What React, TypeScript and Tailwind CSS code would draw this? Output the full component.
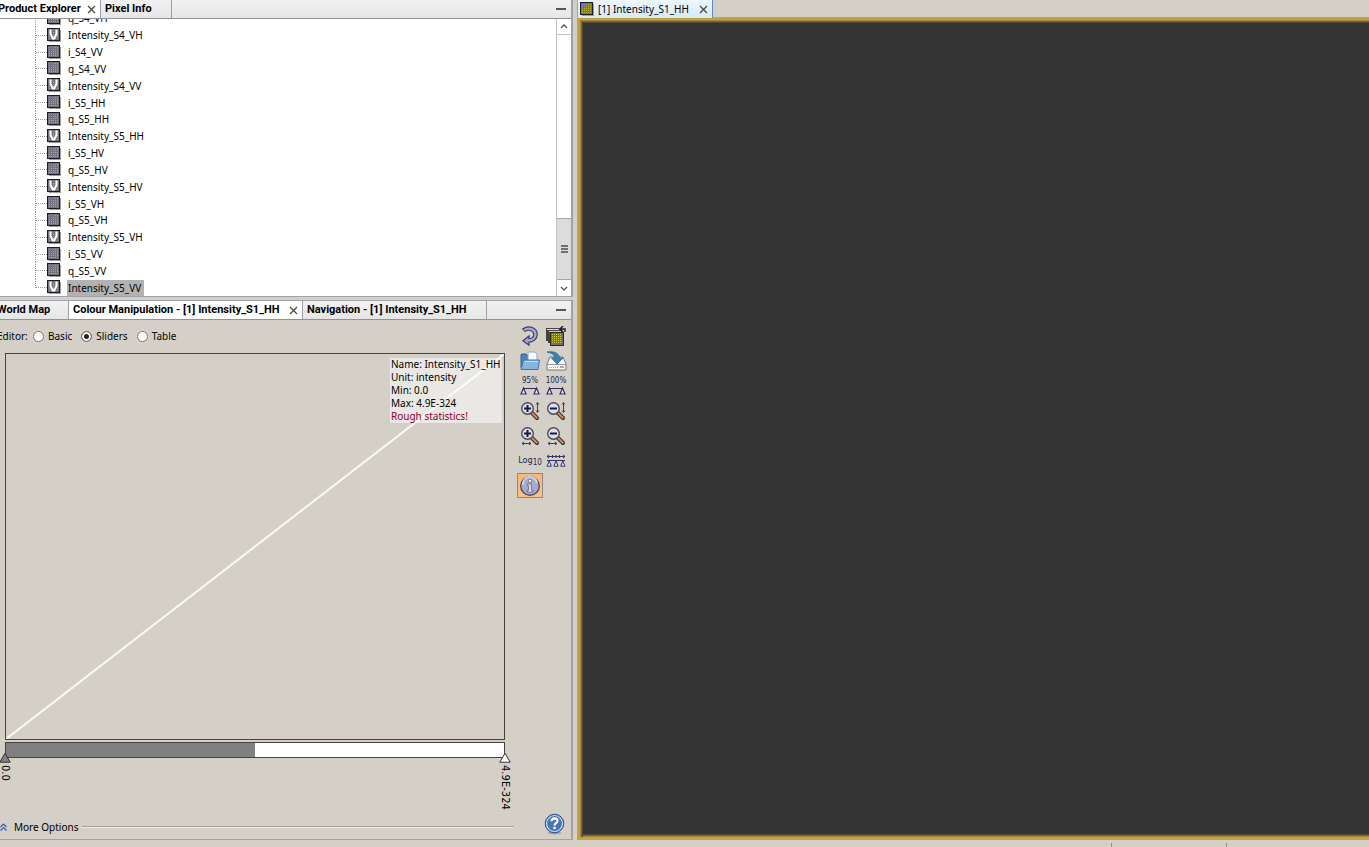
import { useState } from 'react';
import type { ReactNode } from 'react';
import clsx from 'clsx';

const BANDS = [
    'q_S4_VH', 'Intensity_S4_VH', 'i_S4_VV', 'q_S4_VV', 'Intensity_S4_VV',
    'i_S5_HH', 'q_S5_HH', 'Intensity_S5_HH', 'i_S5_HV', 'q_S5_HV',
    'Intensity_S5_HV', 'i_S5_VH', 'q_S5_VH', 'Intensity_S5_VH', 'i_S5_VV',
    'q_S5_VV', 'Intensity_S5_VV',
];

const DOTS = [2, 4, 6, 8, 10];

function BandIcon({ virtual = false }: { virtual?: boolean }) {
    return (
        <svg width="15" height="15" viewBox="0 0 15 15" className="shrink-0">
            <rect x="2" y="2" width="12" height="12" fill="#a09e98" />
            <rect x="0" y="0" width="13" height="13" fill="#1c1c24" />
            <rect x="1" y="1" width="11" height="11" fill="#73737f" />
            {DOTS.map(y => DOTS.map(x => (
                <rect key={`${x}-${y}`} x={x} y={y} width="1" height="1" fill={x + y > 9 ? '#b8b23c' : '#8686b4'} />
            )))}
            {virtual && (
                <path d="M3.5 1.5 V6 L5.8 10.5 H7.2 L9.5 6 V1.5" fill="none" stroke="#fff" strokeWidth="2" />
            )}
        </svg>
    );
}

function CloseIcon() {
    return (
        <svg width="9" height="9" viewBox="0 0 9 9" className="shrink-0">
            <path d="M1 1 L8 8 M8 1 L1 8" stroke="#444" strokeWidth="1.2" />
        </svg>
    );
}

interface TabProps {
    label: string;
    active?: boolean;
    className?: string;
}

function Tab({ label, active, className }: TabProps) {
    return (
        <button
            type="button"
            className={clsx(
                'flex items-center gap-1 shrink-0 h-full border-r border-[#9b9ea8] font-[Roboto,sans-serif] text-[11px] font-bold whitespace-nowrap',
                active ? 'bg-white' : 'bg-linear-to-b from-[#f2f2f2] to-[#e6e6e6]',
                className,
            )}
        >
            {label}
            {active && <span className="ml-auto mr-1"><CloseIcon /></span>}
        </button>
    );
}

function TabBar({ children }: { children: ReactNode }) {
    return (
        <div className="flex h-[19px] shrink-0 border-b border-[#8f929c] bg-linear-to-b from-[#f2f2f2] to-[#e6e6e6]">
            {children}
            <button type="button" aria-label="Minimize" className="ml-auto mr-[5px] flex items-center">
                <span className="block h-[2px] w-[10px] bg-[#555]" />
            </button>
        </div>
    );
}

function ProductExplorer() {
    const [selected, setSelected] = useState('Intensity_S5_VV');

    return (
        <section className="flex flex-col shrink-0 h-[297px] border-r-2 border-b border-[#9fa2a8] bg-white">
            <TabBar>
                <Tab label="Product Explorer" active className="w-[101px] indent-[-2px]" />
                <Tab label="Pixel Info" className="w-[71px] pl-1" />
            </TabBar>
            <div className="flex flex-1 min-h-0">
                <div className="flex flex-1 flex-col justify-end overflow-hidden">
                    <ul className="flex flex-col shrink-0 h-[286px] pl-[35px]">
                        {BANDS.map((name, i) => (
                            <li key={name} className="flex flex-1 min-h-0 items-center">
                                <span className="h-full w-px flex flex-col">
                                    <span className={clsx('border-l border-dotted border-[#999]', i === BANDS.length - 1 ? 'h-1/2' : 'h-full')} />
                                </span>
                                <span className="w-[11px] border-t border-dotted border-[#999]" />
                                <BandIcon virtual={name.startsWith('Intensity')} />
                                <button
                                    type="button"
                                    onClick={() => setSelected(name)}
                                    className={clsx('ml-[5px] pl-px pr-[3px] h-[16px] leading-[16px]', name === selected && 'bg-[#b2b2b2]')}
                                >
                                    {name}
                                </button>
                            </li>
                        ))}
                    </ul>
                </div>
                <div className="flex flex-col w-[15px] border-l border-[#c4c4c4]">
                    <button type="button" aria-label="Scroll up" className="flex h-[16px] items-center justify-center border-b border-[#c4c4c4]">
                        <svg width="8" height="5" viewBox="0 0 8 5"><path d="M1 4 L4 1 L7 4" fill="none" stroke="#555" strokeWidth="1.3" /></svg>
                    </button>
                    <div className="flex-1" />
                    <div className="flex flex-col h-[62px] items-center justify-center gap-px border-y border-[#a6a6a6] bg-[#dcdcdc]">
                        <span className="h-[2px] w-[7px] bg-[#707070]" />
                        <span className="h-[2px] w-[7px] bg-[#707070]" />
                        <span className="h-[2px] w-[7px] bg-[#707070]" />
                    </div>
                    <button type="button" aria-label="Scroll down" className="flex h-[16px] items-center justify-center">
                        <svg width="8" height="5" viewBox="0 0 8 5"><path d="M1 1 L4 4 L7 1" fill="none" stroke="#555" strokeWidth="1.3" /></svg>
                    </button>
                </div>
            </div>
        </section>
    );
}

/* ---- toolbar icons ---- */

function ResetIcon() {
    return (
        <svg width="20" height="20" viewBox="0 0 20 20">
            <path d="M3.5 4.5 C8 0.5 15.5 3 15.5 8.5 C15.5 12 12.5 14.5 8.5 14.5" fill="none" stroke="#3a3a58" strokeWidth="4.6" />
            <path d="M9 10 L3 14.8 L9 19.2 Z" fill="#a4a4dc" stroke="#3a3a58" strokeWidth="1.2" />
            <path d="M4.2 4.1 C8.5 1 15.5 3.2 15.5 8.5 C15.5 12 12.5 14.5 8 14.5" fill="none" stroke="#a9a9de" strokeWidth="2.4" />
        </svg>
    );
}

function ApplyAllIcon() {
    return (
        <svg width="20" height="20" viewBox="0 0 20 20">
            <rect x="0" y="2" width="14" height="13" fill="#44443f" />
            <rect x="1" y="3" width="12" height="1" fill="#ddd" />
            <rect x="2" y="4" width="14" height="13" fill="#44443f" />
            <rect x="3" y="5" width="12" height="1" fill="#ccc" />
            <rect x="4" y="6" width="14" height="14" fill="#2a2a30" />
            <rect x="5" y="7" width="12" height="12" fill="#6c6c88" />
            {DOTS.map(y => DOTS.map(x => (
                <rect key={`${x}-${y}`} x={x + 4} y={y + 6} width="1" height="1" fill="#cfc83c" />
            )))}
            <path d="M19 6 V3 H15 M17 0 L14 3 L17 6" fill="none" stroke="#222" strokeWidth="1.5" />
        </svg>
    );
}

function FolderIcon() {
    return (
        <svg width="20" height="20" viewBox="0 0 20 20">
            <path d="M1 17 V4 Q1 3 2 3 H6 L8 5 H15 V17 Z" fill="#4d83b8" stroke="#2f628f" />
            <path d="M8 1 H15 L17 3 V10 H8 Z" fill="#f7fafd" stroke="#8fa9c0" />
            <path d="M1 18.5 L3.5 9 H19.5 L18 18.5 Z" fill="#86b5e2" stroke="#3d75aa" />
            <path d="M4.5 10.5 H18" stroke="#c4def4" />
        </svg>
    );
}

function SaveIcon() {
    return (
        <svg width="21" height="20" viewBox="0 0 21 20">
            <path d="M4 6 H17 L20 13 V19 H1 V13 Z" fill="#f6f6f6" stroke="#777" />
            <path d="M1 13.5 H20" stroke="#999" />
            <path d="M3 16.5 H12" stroke="#a5a5a5" strokeDasharray="1 1" />
            <rect x="14" y="15" width="4" height="2" fill="#aab" />
            <path d="M1 1 C8 0 13 2 13.5 7 H17 L11 13 L5.5 7 H9 C9 4 6 2 1 1 Z" fill="#3e84b5" stroke="#23628f" strokeWidth="0.8" />
        </svg>
    );
}

function StretchIcon({ label }: { label: string }) {
    return (
        <span className="flex flex-col items-center">
            <span className="h-[10px] font-['DejaVu_Sans_Condensed','DejaVu_Sans',sans-serif] text-[8px] leading-[10px] text-[#1e1e50]">{label}</span>
            <svg width="20" height="9" viewBox="0 0 20 9">
                <path d="M4 2.5 H16" stroke="#30305c" />
                <path d="M1 8 L3.5 2 L6 8 Z M14 8 L16.5 2 L19 8 Z" fill="#e4e4f2" stroke="#30305c" strokeWidth="1.2" />
            </svg>
        </span>
    );
}

function ZoomIcon({ plus = false, vertical = false }: { plus?: boolean; vertical?: boolean }) {
    return (
        <svg width="20" height="20" viewBox="0 0 20 20">
            <path d="M11.5 11.5 L17 17" stroke="#3a2d28" strokeWidth="4" strokeLinecap="round" />
            <path d="M12 12 L16.8 16.8" stroke="#d08c64" strokeWidth="2" strokeLinecap="round" />
            <circle cx="7.5" cy="7.5" r="5.8" fill="#dcdcf2" stroke="#4a4a54" strokeWidth="1.4" />
            <path d={plus ? 'M4 7.5 H11 M7.5 4 V11' : 'M4 7.5 H11'} stroke="#1d1d30" strokeWidth="2" />
            {vertical ? (
                <path d="M17.5 2 V11 M16 3.5 L17.5 1.5 L19 3.5 M16 9.5 L17.5 11.5 L19 9.5" fill="none" stroke="#3a3a74" />
            ) : (
                <path d="M2 17.5 H11 M4 16 L2 17.5 L4 19 M9 16 L11 17.5 L9 19" fill="none" stroke="#3a3a74" />
            )}
        </svg>
    );
}

function EvenIcon() {
    return (
        <svg width="20" height="14" viewBox="0 0 20 14">
            <path d="M1 2.5 H19 M3 1 L1 2.5 L3 4 M17 1 L19 2.5 L17 4 M6.5 1 V4 M10 1 V4 M13.5 1 V4" fill="none" stroke="#34346a" />
            <path d="M1 6.5 H19" stroke="#34346a" />
            <path d="M1 12.2 L3.2 7 L5.4 12.2 Z M7.8 12.2 L10 7 L12.2 12.2 Z M14.6 12.2 L16.8 7 L19 12.2 Z" fill="#e4e4f2" stroke="#34346a" />
        </svg>
    );
}

function InfoIcon() {
    return (
        <svg width="22" height="22" viewBox="0 0 22 22">
            <circle cx="11" cy="11" r="9.3" fill="#a9a9cf" stroke="#4d4d66" strokeWidth="1.4" />
            <path d="M4 10 A7 7 0 0 1 18 8" fill="none" stroke="#cfcfe8" strokeWidth="2" />
            <circle cx="11" cy="5.8" r="1.7" fill="#fff" stroke="#55556c" strokeWidth="0.7" />
            <path d="M8.3 9 H12.4 V15.2 H14 V17 H8 V15.2 H9.8 V10.8 H8.3 Z" fill="#e8e8f4" stroke="#55556c" strokeWidth="0.7" />
        </svg>
    );
}

const TOOLS: { label: string; icon: ReactNode; pressed?: boolean }[] = [
    { label: 'Reset to defaults', icon: <ResetIcon /> },
    { label: 'Apply to other bands', icon: <ApplyAllIcon /> },
    { label: 'Import settings', icon: <FolderIcon /> },
    { label: 'Export settings', icon: <SaveIcon /> },
    { label: 'Stretch 95%', icon: <StretchIcon label="95%" /> },
    { label: 'Stretch 100%', icon: <StretchIcon label="100%" /> },
    { label: 'Zoom in vertically', icon: <ZoomIcon plus vertical /> },
    { label: 'Zoom out vertically', icon: <ZoomIcon vertical /> },
    { label: 'Zoom in horizontally', icon: <ZoomIcon plus /> },
    { label: 'Zoom out horizontally', icon: <ZoomIcon /> },
    {
        label: 'Logarithmic display',
        icon: <span className="font-['DejaVu_Sans_Condensed','DejaVu_Sans',sans-serif] text-[9px] text-[#1e1e50]">Log<sub className="text-[8px]">10</sub></span>,
    },
    { label: 'Distribute evenly', icon: <EvenIcon /> },
    { label: 'Show extra information', icon: <InfoIcon />, pressed: true },
];

function Toolbar() {
    return (
        <div className="flex flex-col w-[54px] shrink-0 pt-[3px] pb-[4px]">
            <div className="grid grid-cols-[26px_26px] auto-rows-[25px]">
                {TOOLS.map(tool => (
                    <button
                        key={tool.label}
                        type="button"
                        aria-label={tool.label}
                        className={clsx(
                            'flex items-center justify-center',
                            tool.pressed && 'border border-[#8c8a84] bg-linear-to-b from-[#f6b97c] to-[#ffc07e]',
                        )}
                    >
                        {tool.icon}
                    </button>
                ))}
            </div>
            <button type="button" aria-label="Help" className="mt-auto ml-[27px] self-start">
                <svg width="21" height="22" viewBox="0 0 21 22">
                    <ellipse cx="10.5" cy="20" rx="7" ry="1.5" fill="#a8a59e" />
                    <circle cx="10.5" cy="10.5" r="9.3" fill="#4a75b3" stroke="#2f5288" />
                    <circle cx="10.5" cy="10.5" r="8" fill="none" stroke="#c9dcf2" strokeWidth="1.2" />
                    <path d="M7.5 8.2 Q7.6 5.4 10.6 5.4 Q13.6 5.5 13.5 8 Q13.4 9.5 11.7 10.4 Q10.6 11 10.6 12.4" fill="none" stroke="#fff" strokeWidth="2.2" />
                    <rect x="9.4" y="13.8" width="2.4" height="2.2" fill="#fff" />
                </svg>
            </button>
        </div>
    );
}

interface HandleProps {
    label: string;
    text: string;
    fill: string;
    value: number;
    onChange: (value: number) => void;
}

function Handle({ label, text, fill, value, onChange }: HandleProps) {
    return (
        <>
            <div
                className="absolute top-0 flex flex-col w-[12px] -translate-x-1/2 items-center"
                style={{ left: `${value}%` }}
            >
                <svg width="12" height="11" viewBox="0 0 12 11">
                    <path d="M6 1.2 L11.2 10.2 H0.8 Z" fill={fill} stroke="#333" />
                </svg>
                <span className="mt-[2px] leading-[12px] [writing-mode:vertical-rl]">{text}</span>
            </div>
            <input
                type="range"
                aria-label={label}
                value={value}
                onChange={e => onChange(Number(e.target.value))}
                className="absolute inset-x-0 top-0 h-[11px] opacity-0 pointer-events-none [&::-webkit-slider-thumb]:pointer-events-auto"
            />
        </>
    );
}

const EDITORS = ['Basic', 'Sliders', 'Table'];

function ColourManipulation() {
    const [editor, setEditor] = useState('Sliders');
    const [low, setLow] = useState(0);
    const [high, setHigh] = useState(100);

    return (
        <section className="flex flex-1 flex-col min-h-0 border-t border-r-2 border-b border-[#9fa2a8]">
            <TabBar>
                <Tab label="World Map" className="w-[69px] indent-[-3px]" />
                <Tab label="Colour Manipulation - [1] Intensity_S1_HH" active className="w-[234px] pl-1" />
                <Tab label="Navigation - [1] Intensity_S1_HH" className="w-[184px] pl-1" />
            </TabBar>
            <div className="flex flex-1 min-h-0">
                <div className="flex flex-1 flex-col min-w-0">
                    <div role="radiogroup" aria-label="Editor" className="flex h-[32px] shrink-0 items-center">
                        <span className="w-[33px] indent-[-3px]">Editor:</span>
                        {EDITORS.map(name => (
                            <label key={name} className="flex items-center gap-1 mr-[9px]">
                                <input
                                    type="radio"
                                    name="editor"
                                    checked={editor === name}
                                    onChange={() => setEditor(name)}
                                    className="appearance-none w-[11px] h-[11px] rounded-full border border-[#777] bg-white checked:bg-[#222] checked:shadow-[inset_0_0_0_2px_white]"
                                />
                                {name}
                            </label>
                        ))}
                    </div>

                    {/* Histogram */}
                    <div className="relative flex flex-1 min-h-0 ml-[5px] mr-[12px] mt-px justify-end border border-[#444]">
                        <svg className="absolute inset-0 w-full h-full" viewBox="0 0 100 100" preserveAspectRatio="none">
                            <path d="M0 100 L100 0" stroke="#fafaf5" strokeWidth="2" vectorEffect="non-scaling-stroke" />
                        </svg>
                        <div className="relative self-start mt-1 mr-[2px] w-[112px] pl-px bg-white/50 leading-[13px] whitespace-nowrap">
                            <p>Name: Intensity_S1_HH</p>
                            <p>Unit: intensity</p>
                            <p>Min: 0.0</p>
                            <p>Max: 4.9E-324</p>
                            <p className="text-[#8c0030]">Rough statistics!</p>
                        </div>
                    </div>

                    {/* Colour ramp with its two sliders */}
                    <div className="flex shrink-0 h-[16px] ml-[5px] mr-[12px] mt-[2px] border border-[#444]">
                        <span className="w-1/2 bg-[#808080]" />
                        <span className="w-1/2 bg-white" />
                    </div>
                    <div className="relative -mt-[6px] shrink-0 h-[63px] ml-[5px] mr-[12px] font-['DejaVu_Sans',sans-serif]">
                        <Handle label="Minimum" text="0.0" fill="#808080" value={low} onChange={setLow} />
                        <Handle label="Maximum" text="4.9E-324" fill="#fff" value={high} onChange={setHigh} />
                    </div>

                    <div className="flex shrink-0 h-[24px] mr-[3px] items-center">
                        <button type="button" className="flex items-center">
                            <svg width="7" height="8" viewBox="0 0 7 8"><path d="M0.5 4 L3.5 1 L6.5 4 M0.5 7.5 L3.5 4.5 L6.5 7.5" fill="none" stroke="#3a5cae" strokeWidth="1.2" /></svg>
                            <span className="ml-[7px]">More Options</span>
                        </button>
                        <span className="ml-1 flex-1 h-[2px] border-t border-[#a0a0a0] bg-[#eee]" />
                    </div>
                </div>
                <Toolbar />
            </div>
        </section>
    );
}

function ImageView() {
    return (
        <main className="flex flex-1 flex-col min-w-0 border-l border-b border-[#9fa2a8]">
            <div className="flex h-[18px] shrink-0">
                <button
                    type="button"
                    className="flex items-center w-[135px] pl-[2px] gap-[3px] border-r border-[#5b8fbe] bg-linear-to-b from-[#eef6fe] to-[#d6e8fa] whitespace-nowrap"
                >
                    <BandIcon />
                    [1] Intensity_S1_HH
                    <span className="ml-auto mr-1"><CloseIcon /></span>
                </button>
                <span className="flex-1 border-b border-[#9fa2a8]" />
            </div>
            <div className="flex-1 border-y-2 border-l-2 border-[#c4a03c] bg-[#333] shadow-[inset_1px_1px_0_#a0853c,inset_2px_2px_0_#776538,inset_3px_3px_0_#524a36,inset_0_-1px_0_#a0853c,inset_0_-2px_0_#776538,inset_0_-3px_0_#524a36]" />
        </main>
    );
}

export default function App() {
    return (
        <div className="flex flex-col h-screen overflow-hidden bg-[#d4d0c8] text-black font-['Noto_Sans',sans-serif] text-[10px]">
            <div className="flex flex-1 min-h-0 gap-[4px]">
                <div className="flex flex-col w-[573px] shrink-0 gap-[3px]">
                    <ProductExplorer />
                    <ColourManipulation />
                </div>
                <ImageView />
            </div>
            <footer className="flex h-[7px] shrink-0 pt-[3px] justify-end">
                <span className="w-[115px] border-l border-[#909090]" />
                <span className="w-[143px] border-l border-[#909090]" />
            </footer>
        </div>
    );
}
